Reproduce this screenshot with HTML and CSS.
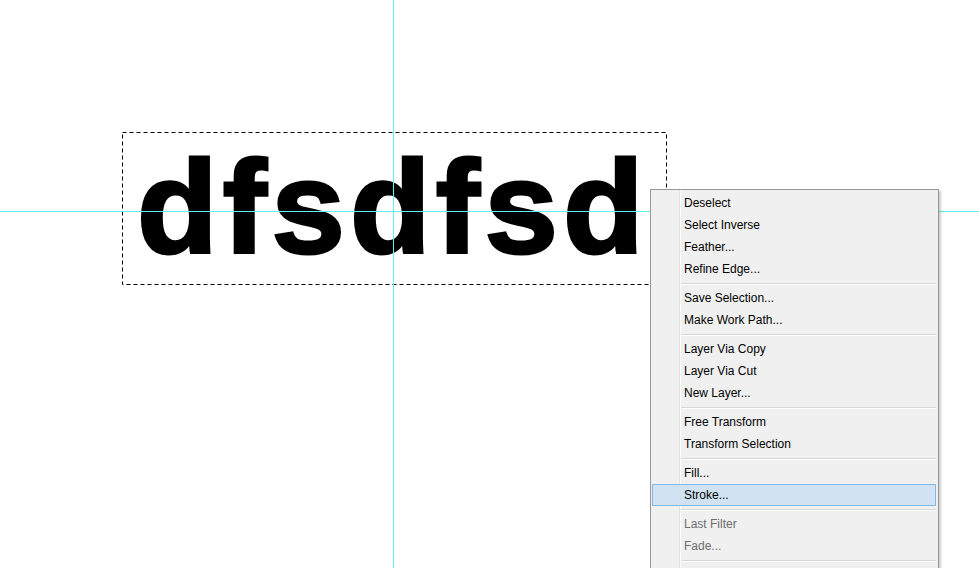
FILE: index.html
```html
<!DOCTYPE html>
<html lang="en">
<head>
    <meta charset="UTF-8">
    <meta name="viewport" content="width=device-width, initial-scale=1.0">
    <title>Selection Menu</title>
    <link rel="stylesheet" href="styles.css">
</head>
<body>

    <div class="canvas">
        <div class="type-layer">dfsdfsd</div>

        <svg class="marquee" width="546" height="154" viewBox="0 0 546 154">
            <rect x="0.5" y="0.5" width="544" height="152" fill="none" stroke="#000" stroke-width="1" stroke-dasharray="4 3"/>
        </svg>

        <div class="guide guide-v"></div>
        <div class="guide guide-h"></div>

        <div class="context-menu">
            <ul class="menu-list">
                <li>Deselect</li>
                <li>Select Inverse</li>
                <li>Feather...</li>
                <li>Refine Edge...</li>
                <li class="sep"></li>
                <li>Save Selection...</li>
                <li>Make Work Path...</li>
                <li class="sep"></li>
                <li>Layer Via Copy</li>
                <li>Layer Via Cut</li>
                <li>New Layer...</li>
                <li class="sep"></li>
                <li>Free Transform</li>
                <li>Transform Selection</li>
                <li class="sep"></li>
                <li>Fill...</li>
                <li class="active">Stroke...</li>
                <li class="sep"></li>
                <li class="disabled">Last Filter</li>
                <li class="disabled">Fade...</li>
                <li class="sep"></li>
            </ul>
        </div>
    </div>

</body>
</html>
```

FILE: styles.css
```css
* {
    margin: 0;
    padding: 0;
    box-sizing: border-box;
}

body {
    background: #fff;
    font-family: 'Liberation Sans', Arial, sans-serif;
    overflow: hidden;
}

.canvas {
    position: relative;
    width: 979px;
    height: 568px;
    overflow: hidden;
}

/* heavy type layer, stroked a bit to get the black weight */
.type-layer {
    position: absolute;
    left: 137px;
    top: 142px;
    font-family: 'Liberation Sans', Arial, sans-serif;
    font-weight: bold;
    font-size: 132px;
    line-height: 1;
    letter-spacing: 5px;
    color: #000;
    -webkit-text-stroke: 3px #000;
    white-space: nowrap;
}

.marquee {
    position: absolute;
    left: 122px;
    top: 132px;
    display: block;
}

.guide {
    position: absolute;
    background: #66f0f0;
}

.guide-v {
    left: 393px;
    top: 0;
    width: 1px;
    height: 568px;
}

.guide-h {
    left: 0;
    top: 211px;
    width: 979px;
    height: 1px;
}

.context-menu {
    position: absolute;
    left: 650px;
    top: 189px;
    width: 289px;
    height: 420px;
    background-color: #f0f0f0;
    background-image: linear-gradient(to right, transparent 28px, #e2e3e3 28px, #e2e3e3 29px, #fff 29px, #fff 30px, transparent 30px);
    border: 1px solid #979797;
    box-shadow: 2px 2px 2px rgba(0, 0, 0, 0.2);
    padding: 2px 2px 2px 1px;
}

.menu-list {
    list-style-type: none;
}

.menu-list li {
    height: 22px;
    line-height: 20px;
    padding-left: 31px;
    border: 1px solid transparent;
    font-size: 12px;
    color: #000;
    white-space: nowrap;
}

.menu-list li.active {
    background: #d1e3f3;
    border-color: #84b8e9;
}

.menu-list li.disabled {
    color: #6d6d6d;
}

.menu-list li.sep {
    height: 7px;
    padding: 0;
    border: none;
    margin-left: 29px;
    background: linear-gradient(to bottom, transparent 3px, #d7d7d7 3px, #d7d7d7 4px, #fff 4px, #fff 5px, transparent 5px);
}
```
